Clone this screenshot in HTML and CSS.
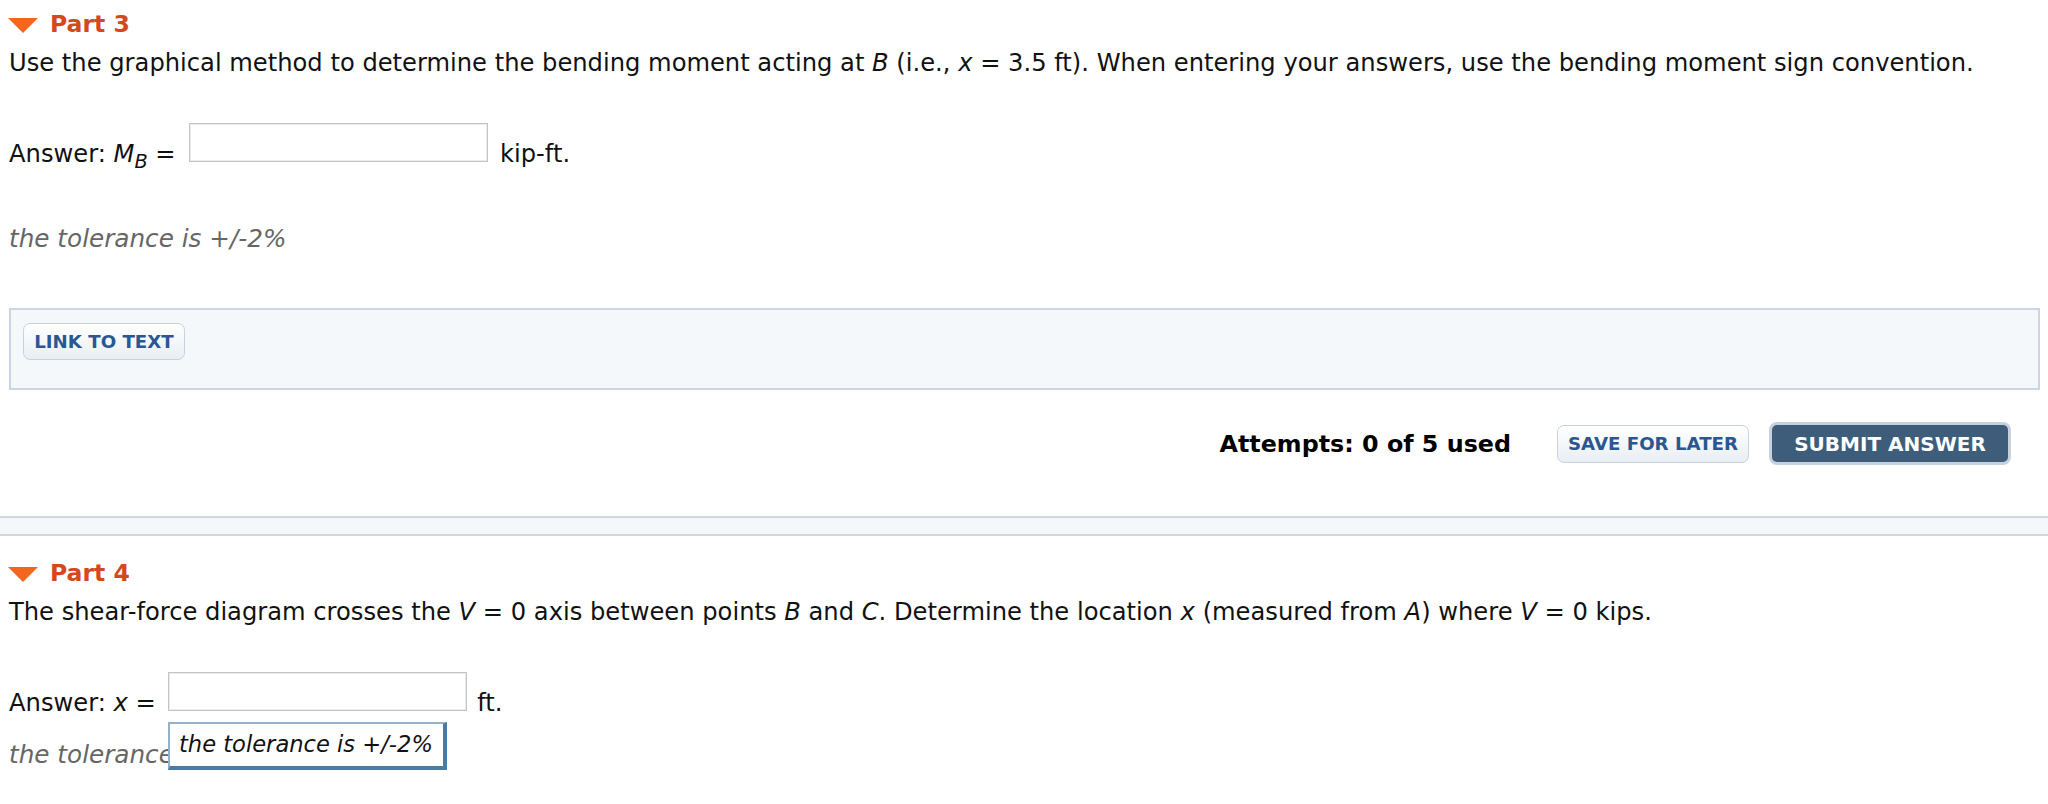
FILE: index.html
```html
<!DOCTYPE html>
<html>
<head>
<meta charset="utf-8">
<link rel="stylesheet" href="styles.css">
</head>
<body>
<div class="part part3">
  <div class="part-head"><span class="tri"></span><span class="part-title">Part 3</span></div>
  <p class="q">Use the graphical method to determine the bending moment acting at <i>B</i> (i.e., <i>x</i> = 3.5 ft). When entering your answers, use the bending moment sign convention.</p>
  <div class="answer">Answer: <i>M<sub>B</sub></i> = <span class="field"></span> kip-ft.</div>
  <p class="tol">the tolerance is +/-2%</p>
  <div class="linkbox"><span class="btn-light btn-link">LINK TO TEXT</span></div>
  <div class="actions">
    <span class="attempts">Attempts: 0 of 5 used</span>
    <span class="btn-light btn-save">SAVE FOR LATER</span>
    <span class="btn-submit">SUBMIT ANSWER</span>
  </div>
</div>
<div class="sep"></div>
<div class="part part4">
  <div class="part-head"><span class="tri"></span><span class="part-title">Part 4</span></div>
  <p class="q">The shear-force diagram crosses the <i>V</i> = 0 axis between points <i>B</i> and <i>C</i>. Determine the location <i>x</i> (measured from <i>A</i>) where <i>V</i> = 0 kips.</p>
  <div class="answer">Answer: <i>x</i> = <span class="field field-x"></span> ft.</div>
  <p class="tol tol-tight">the tolerance is +/-2%<span class="tooltip">the tolerance is +/-2%</span></p>
</div>
</body>
</html>
```

FILE: styles.css
```css
html, body {
  margin: 0;
  padding: 0;
  background: #ffffff;
}
body {
  font-family: "DejaVu Sans", Verdana, sans-serif;
  font-size: 24.2px;
  color: #111111;
  width: 2048px;
  height: 804px;
  overflow: hidden;
}
.part {
  padding-left: 9px;
}
.part3 {
  padding-top: 9px;
}
.part4 {
  padding-top: 22px;
}
.part-head {
  height: 30px;
  display: flex;
  align-items: center;
}
.tri {
  width: 0;
  height: 0;
  border-left: 15px solid transparent;
  border-right: 15px solid transparent;
  border-top: 15px solid #f4661f;
  margin-top: 2px;
  margin-left: -1px;
}
.part-title {
  font-weight: bold;
  font-size: 23.5px;
  color: #d2491b;
  margin-left: 12px;
}
.q {
  margin: 9px 0 0 0;
  line-height: 30px;
  white-space: nowrap;
}
.answer {
  margin-top: 45px;
  line-height: 30px;
  white-space: nowrap;
}
.answer sub {
  font-size: 0.8em;
  vertical-align: -0.3em;
  line-height: 0;
}
.field {
  display: inline-block;
  width: 297px;
  height: 37px;
  border: 1px solid #c4c4c4;
  box-shadow: inset 0 0 0 1px #ececec;
  margin: 0 4px 0 6px;
}
.field-x {
  margin-left: 5px;
  margin-right: 2px;
}
.tol {
  margin: 55px 0 0 0;
  line-height: 30px;
  font-style: italic;
  font-size: 24.7px;
  color: #666666;
  position: relative;
}
.tol-tight {
  margin-top: 22px;
}
.tooltip {
  position: absolute;
  left: 159px;
  top: -18px;
  width: 264px;
  height: 42px;
  line-height: 40px;
  padding-left: 9px;
  background: #ffffff;
  border-top: 2px solid #93b1c8;
  border-left: 2px solid #93b1c8;
  border-right: 4px solid #4b7ba0;
  border-bottom: 4px solid #4b7ba0;
  color: #111111;
  font-size: 22.6px;
  white-space: nowrap;
}
.linkbox {
  margin: 54px 8px 0 0;
  border: 2px solid #cdd5e0;
  background: #f5f8fb;
  padding: 13px 0 0 12px;
  box-sizing: border-box;
  height: 82px;
}
.btn-light {
  display: inline-flex;
  align-items: center;
  justify-content: center;
  box-sizing: border-box;
  border: 1px solid #c8d2dd;
  border-radius: 7px;
  background: linear-gradient(#ffffff, #e9eef3);
  color: #2a5791;
  font-weight: bold;
  font-size: 18.2px;
  white-space: nowrap;
}
.btn-link {
  width: 162px;
  height: 37px;
}
.actions {
  margin-top: 32px;
  height: 43px;
  display: flex;
  justify-content: flex-end;
  align-items: center;
  padding-right: 40px;
}
.attempts {
  font-weight: bold;
  font-size: 23.8px;
  color: #000000;
  margin-right: 46px;
}
.btn-save {
  width: 192px;
  height: 38px;
  margin-right: 23px;
}
.btn-submit {
  display: inline-flex;
  align-items: center;
  justify-content: center;
  box-sizing: border-box;
  width: 236px;
  height: 37px;
  border-radius: 5px;
  background: #3e5d7b;
  box-shadow: 0 0 0 3px #c7d1dd;
  color: #ffffff;
  font-weight: bold;
  font-size: 20px;
  white-space: nowrap;
}
.sep {
  margin-top: 51px;
  height: 16px;
  border-top: 2px solid #cfd6e0;
  border-bottom: 2px solid #cfd6e0;
  background: #f5f8fb;
}
```
